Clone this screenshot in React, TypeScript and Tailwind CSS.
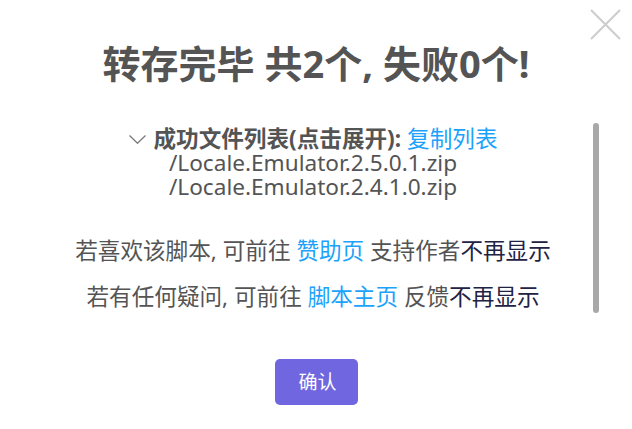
import React from 'react';

const files = ['/Locale.Emulator.2.5.0.1.zip', '/Locale.Emulator.2.4.1.0.zip'];

export default function App() {
  return (
    <div
      className="relative w-[632px] h-[429px] overflow-hidden bg-white text-[#545454]"
      style={{ fontFamily: '"Noto Sans", "Noto Sans CJK SC", sans-serif' }}
    >
      {/* close */}
      <button className="absolute top-[9px] right-[11px] w-[31px] h-[31px] text-[#cccccc]">
        <svg viewBox="0 0 31 31" className="w-full h-full" fill="none" stroke="currentColor" strokeWidth="2">
          <path d="M1 1 L30 30 M30 1 L1 30" />
        </svg>
      </button>

      <h2 className="pt-[42px] text-center text-[38px] leading-[43px] font-bold">
        转存完毕 共2个, 失败0个!
      </h2>

      <div className="relative mt-[33px] h-[200px] overflow-hidden">
        <div className="pl-[26px] pr-[32px] pt-[9px] text-center text-[22.6px]">
          <div className="leading-[24px]">
            <div className="flex items-center justify-center">
              <svg width="17" height="9" viewBox="0 0 17 9" fill="none" stroke="#777" strokeWidth="1.2" className="mr-[8px]">
                <path d="M0.5 0.5 L8.5 8.3 L16.5 0.5" />
              </svg>
              <span className="font-bold">成功文件列表(点击展开):</span>
              <span className="ml-[6px] text-[#1ba2fb]">复制列表</span>
            </div>
            {files.map((f) => (
              <div key={f}>{f}</div>
            ))}
          </div>
          <div className="mt-[29px] leading-[46px]">
            <div>
              若喜欢该脚本, 可前往 <span className="text-[#1ba2fb]">赞助页</span> 支持作者
              <span className="text-[#222244]">不再显示</span>
            </div>
            <div>
              若有任何疑问, 可前往 <span className="text-[#1ba2fb]">脚本主页</span> 反馈
              <span className="text-[#222244]">不再显示</span>
            </div>
          </div>
        </div>
        {/* scrollbar thumb */}
        <div className="absolute top-[5px] right-[33px] w-[6px] h-[190px] rounded-full bg-[#a8a8a8]" />
      </div>

      <div className="mt-[41px] flex justify-center">
        <button className="w-[83px] h-[46px] rounded-[5px] bg-[#7066e0] text-white text-[19px] pl-[3px]">
          确认
        </button>
      </div>
    </div>
  );
}
